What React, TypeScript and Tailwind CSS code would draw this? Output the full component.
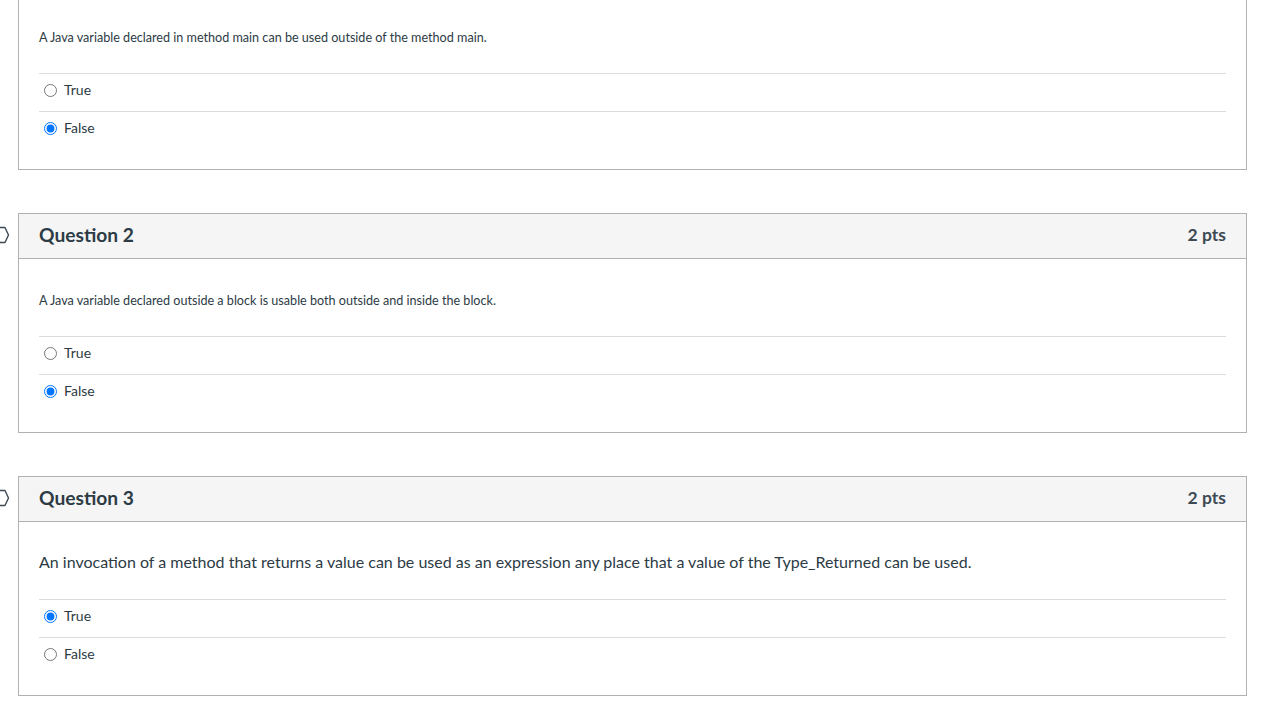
const font = { fontFamily: "Lato, 'Open Sans', sans-serif" }

type Question = {
    id: number
    text: string
    large?: boolean
    answer: "True" | "False"
    scrolledPast?: boolean
}

const questions: Question[] = [
    {
        id: 1,
        text: "A Java variable declared in method main can be used outside of the method main.",
        answer: "False",
        scrolledPast: true,
    },
    { id: 2, text: "A Java variable declared outside a block is usable both outside and inside the block.", answer: "False" },
    {
        id: 3,
        text: "An invocation of a method that returns a value can be used as an expression any place that a value of the Type_Returned can be used.",
        large: true,
        answer: "True",
    },
]

// flag bookmark, mostly off the left edge
const FlagIcon = () => (
    <svg width="12" height="18" viewBox="0 0 12 18" className="absolute left-[-18px] top-[13px]">
        <path d="M-2 1.5 H5 L8.5 9 L5 16.5 H-2" fill="none" stroke="#3d4a54" strokeWidth="1.4" strokeLinejoin="round" />
    </svg>
)

const Answer = ({ label, checked, name }: { label: string; checked: boolean; name: string }) => (
    <label className="flex items-center border-t border-[#dcdcdc] pt-[6px] pb-[11px] h-[38px]">
        <input
            type="radio"
            name={name}
            defaultChecked={checked}
            className="m-0 ml-[5px] w-[13px] h-[13px]"
        />
        <span className="ml-[7px] text-[14px] leading-[20px] text-[#2d3b45]">{label}</span>
    </label>
)

const QuestionCard = ({ q }: { q: Question }) => {
    return (
        <div className="relative ml-[18px] w-[1229px]">
            {!q.scrolledPast && <FlagIcon />}
            <div className="border border-[#aeb2b5]">
                {!q.scrolledPast && (
                    <div className="flex items-center justify-between h-[45px] bg-[#f5f5f5] border-b border-[#aeb2b5] px-[20px] pb-[3px] text-[#2d3b45]">
                        <h2 className="text-[19.2px] font-bold leading-none">Question {q.id}</h2>
                        <span className="text-[17.5px] font-bold leading-none text-[#3d4a54]">2 pts</span>
                    </div>
                )}
                <div className={`px-[20px] pb-[20px] ${q.large ? "pt-[28px]" : "pt-[33px]"}`}>
                    <p
                        className={
                            q.large
                                ? "text-[16px] leading-[24px] text-[#2d3b45] mb-[25px]"
                                : "text-[12.6px] leading-[18px] text-[#2d3b45] mb-[26px]"
                        }
                    >
                        {q.text}
                    </p>
                    <Answer label="True" checked={q.answer === "True"} name={`q${q.id}`} />
                    <Answer label="False" checked={q.answer === "False"} name={`q${q.id}`} />
                </div>
            </div>
        </div>
    )
}

export default function App() {
    return (
        <div className="w-[1286px] h-[711px] overflow-hidden bg-white" style={font}>
            <div className="flex flex-col gap-[43px] -mt-[5px]">
                {questions.map((q) => (
                    <QuestionCard key={q.id} q={q} />
                ))}
            </div>
        </div>
    )
}
